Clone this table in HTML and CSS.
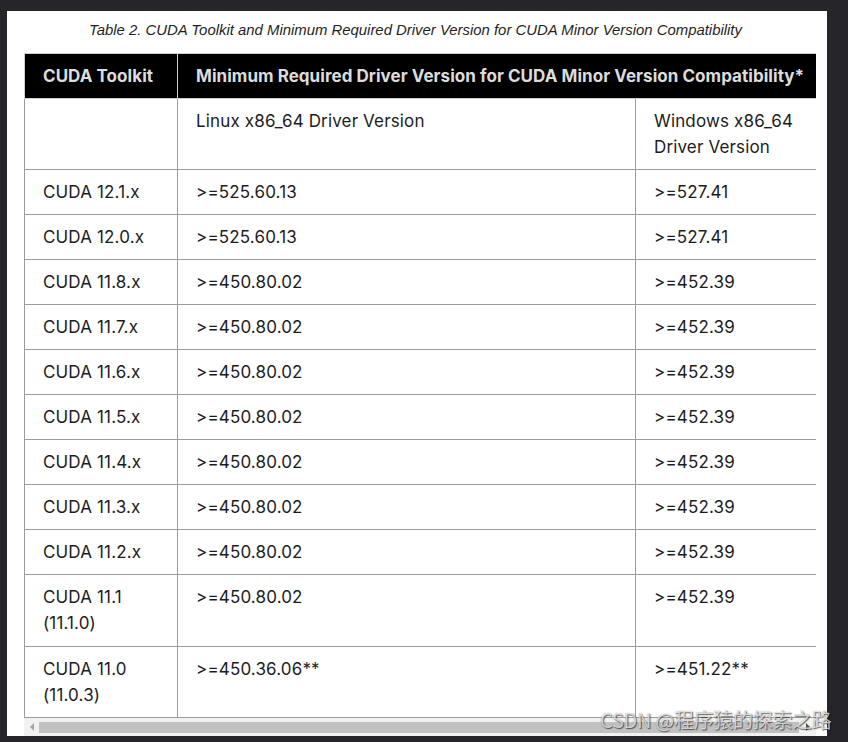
FILE: index.html
```html
<!DOCTYPE html>
<html lang="en">
<head>
<meta charset="utf-8">
<title>CUDA Minor Version Compatibility</title>
<link rel="stylesheet" href="styles.css">
</head>
<body>
<div class="panel">
  <p class="caption">Table 2. CUDA Toolkit and Minimum Required Driver Version for CUDA Minor Version Compatibility</p>
  <div class="scroller">
    <table class="compat">
      <colgroup><col class="c1"><col class="c2"><col class="c3"></colgroup>
      <thead>
        <tr><th>CUDA Toolkit</th><th colspan="2">Minimum Required Driver Version for CUDA Minor Version Compatibility*</th></tr>
      </thead>
      <tbody>
        <tr><td></td><td>Linux x86_64 Driver Version</td><td>Windows x86_64 Driver Version</td></tr>
        <tr><td>CUDA 12.1.x</td><td>&gt;=525.60.13</td><td>&gt;=527.41</td></tr>
        <tr><td>CUDA 12.0.x</td><td>&gt;=525.60.13</td><td>&gt;=527.41</td></tr>
        <tr><td>CUDA 11.8.x</td><td>&gt;=450.80.02</td><td>&gt;=452.39</td></tr>
        <tr><td>CUDA 11.7.x</td><td>&gt;=450.80.02</td><td>&gt;=452.39</td></tr>
        <tr><td>CUDA 11.6.x</td><td>&gt;=450.80.02</td><td>&gt;=452.39</td></tr>
        <tr><td>CUDA 11.5.x</td><td>&gt;=450.80.02</td><td>&gt;=452.39</td></tr>
        <tr><td>CUDA 11.4.x</td><td>&gt;=450.80.02</td><td>&gt;=452.39</td></tr>
        <tr><td>CUDA 11.3.x</td><td>&gt;=450.80.02</td><td>&gt;=452.39</td></tr>
        <tr><td>CUDA 11.2.x</td><td>&gt;=450.80.02</td><td>&gt;=452.39</td></tr>
        <tr class="tall"><td>CUDA 11.1<br>(11.1.0)</td><td>&gt;=450.80.02</td><td>&gt;=452.39</td></tr>
        <tr><td>CUDA 11.0<br>(11.0.3)</td><td>&gt;=450.36.06**</td><td>&gt;=451.22**</td></tr>
      </tbody>
    </table>
  </div>
  <div class="hscroll">
    <span class="arrow arrow-left"></span>
    <span class="thumb"></span>
    <span class="arrow arrow-right"></span>
  </div>
</div>
<div class="watermark">CSDN @程序猿的探索之路</div>
</body>
</html>
```
FILE: styles.css
```css
html, body {
  margin: 0;
  padding: 0;
}
body {
  background: #262529;
  width: 848px;
  height: 742px;
  overflow: hidden;
  position: relative;
  padding: 11px 0 0 7px;
  box-sizing: border-box;
}
.panel {
  width: 820px;
  height: 725px;
  background: #ffffff;
  box-sizing: border-box;
  padding: 8px 0 0 17px;
}
.caption {
  margin: 0 0 12px;
  font: italic 14.9px/22px "Liberation Sans", Arial, sans-serif;
  color: #1f1f1f;
  text-align: center;
  padding-right: 20px;
}
.scroller {
  width: 792px;
  overflow: hidden;
}
.compat {
  border-collapse: collapse;
  table-layout: fixed;
  width: 807px;
  font-family: Inter, "Noto Sans", sans-serif;
  font-size: 17px;
  line-height: 26px;
  color: #1c1c1c;
  letter-spacing: 0.15px;
}
.c1 { width: 153px; }
.c2 { width: 458px; }
.c3 { width: 196px; }
.compat th {
  background: #000000;
  color: #dcdcdc;
  font-weight: 700;
  text-align: left;
  white-space: nowrap;
  padding: 9px 18px;
  border: 1px solid #cfcfcf;
  border-right: none;
  vertical-align: middle;
  letter-spacing: 0.05px;
}
.compat td {
  padding: 9px 18px;
  border: 1px solid #9d9d9d;
  border-right: none;
  vertical-align: top;
}
.compat .tall td {
  padding-bottom: 10px;
}
.hscroll {
  position: relative;
  width: 792px;
  height: 18px;
  background: #f1f1f1;
  display: flex;
  align-items: center;
  box-sizing: border-box;
  padding: 0 4px;
  gap: 4px;
}
.arrow {
  width: 0;
  height: 0;
  border-top: 4px solid transparent;
  border-bottom: 4px solid transparent;
  flex: none;
}
.arrow-left {
  border-right: 4px solid #a3a3a3;
  margin-left: 2px;
}
.arrow-right {
  border-left: 4px solid #505050;
  margin-right: 2px;
}
.thumb {
  flex: 1;
  height: 11px;
  background: #c1c1c1;
  margin: 0 3px 0 1px;
}
.watermark {
  position: absolute;
  left: 600px;
  top: 705px;
  font-family: "Noto Sans CJK SC", "Noto Sans", sans-serif;
  font-size: 20px;
  line-height: 30px;
  color: rgba(255, 255, 255, 0.72);
  text-shadow: 1px 1px 1px rgba(0, 0, 0, 0.55), 0 0 1px rgba(0, 0, 0, 0.4);
  white-space: nowrap;
  letter-spacing: -0.3px;
}
```
